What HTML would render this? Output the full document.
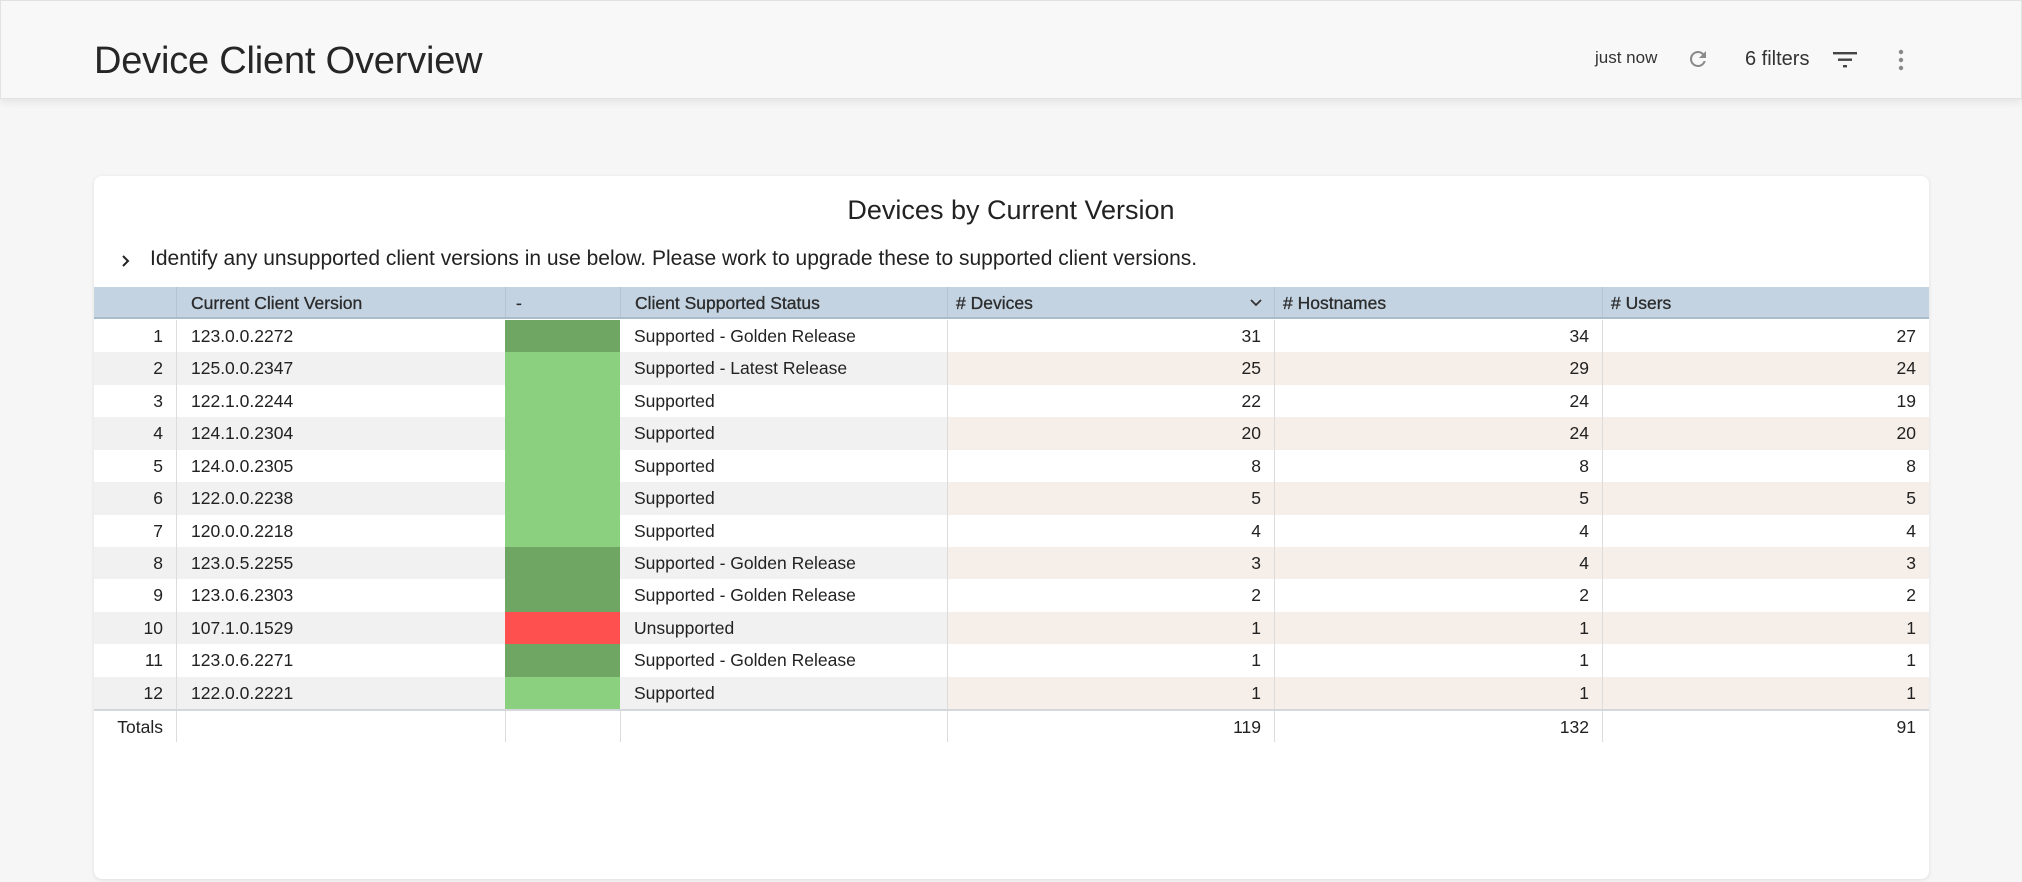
<!DOCTYPE html>
<html><head><meta charset="utf-8"><style>
*{margin:0;padding:0;box-sizing:border-box}
body{width:2022px;height:882px;background:#f6f6f6;font-family:"Liberation Sans",sans-serif;color:#222;position:relative;overflow:hidden}
.hdr{position:absolute;left:0;top:0;width:2022px;height:99px;background:#f8f8f8;border:1px solid #e2e2e2;box-shadow:0 3px 8px rgba(0,0,0,.08)}
.title{position:absolute;left:94px;top:38px;font-size:38px;line-height:46px;color:#262626;letter-spacing:-0.2px}
.hr{position:absolute;top:48px;font-size:17px;color:#333}
.card{position:absolute;left:94px;top:176px;width:1835px;height:703px;background:#fff;border-radius:8px;box-shadow:0 1px 4px rgba(0,0,0,.1)}
.ct{position:absolute;left:0;width:100%;top:195px;text-align:center;font-size:27px;color:#222}
.desc{position:absolute;left:150px;top:247px;font-size:21px;color:#222}
.th{position:absolute;left:94px;top:287px;width:1835px;height:32px;background:#c3d3e2;border-bottom:2px solid #a9bccd}
.c{position:absolute;height:100%;font-size:17.5px;line-height:32px;white-space:nowrap;overflow:hidden}
.th .c{color:#2b2b2b;font-size:17.5px;-webkit-text-stroke:0.3px #2b2b2b}
.row{position:absolute;left:94px;width:1835px;height:33px}
.num{text-align:right;padding-right:13px}
.txt{padding-left:14px}
.bl{border-left:1px solid #dcdcdc}
</style></head><body>
<div class="hdr"></div>
<div class="title">Device Client Overview</div>
<div class="hr" style="left:1595px">just now</div>
<svg style="position:absolute;left:1686px;top:47px" width="24" height="24" viewBox="0 0 24 24"><path d="M17.65 6.35A8 8 0 1 0 19.73 14h-2.08A6 6 0 1 1 12 6c1.66 0 3.14.69 4.22 1.78L13 11h7V4z" fill="#8a8a8a"/></svg>
<div class="hr" style="left:1745px;top:48px;font-size:20px;color:#333">6 filters</div>
<svg style="position:absolute;left:1832px;top:48px" width="26" height="24" viewBox="0 0 26 24"><rect x="1" y="4" width="24" height="2.4" fill="#444"/><rect x="6" y="10.5" width="14" height="2.4" fill="#444"/><rect x="11" y="17" width="4" height="2.4" fill="#444"/></svg>
<svg style="position:absolute;left:1896px;top:48px" width="10" height="24" viewBox="0 0 10 24"><circle cx="5" cy="4" r="2.2" fill="#888"/><circle cx="5" cy="12" r="2.2" fill="#888"/><circle cx="5" cy="20" r="2.2" fill="#888"/></svg>
<div class="card"></div>
<div class="ct">Devices by Current Version</div>
<svg style="position:absolute;left:121px;top:254px" width="10" height="14" viewBox="0 0 10 14"><path d="M2 2l5 5-5 5" stroke="#222" stroke-width="2" fill="none"/></svg>
<div class="desc">Identify any unsupported client versions in use below. Please work to upgrade these to supported client versions.</div>
<div class="th">
<div class="c" style="left:82px;width:329px;padding-left:14px;border-left:1px solid #b4c4d3">Current Client Version</div>
<div class="c" style="left:411px;width:115px;padding-left:10px;border-left:1px solid #b4c4d3">-</div>
<div class="c" style="left:526px;width:327px;padding-left:14px;border-left:1px solid #b4c4d3">Client Supported Status</div>
<div class="c" style="left:853px;width:327px;padding-left:8px;border-left:1px solid #b4c4d3"># Devices<svg style="position:absolute;right:12px;top:12px" width="12" height="8" viewBox="0 0 12 8"><path d="M1 1l5 5 5-5" stroke="#333" stroke-width="1.8" fill="none"/></svg></div>
<div class="c" style="left:1180px;width:328px;padding-left:8px;border-left:1px solid #b4c4d3"># Hostnames</div>
<div class="c" style="left:1508px;width:327px;padding-left:8px;border-left:1px solid #b4c4d3"># Users</div>
</div>
<div id="rows"></div>
<div class="row" style="top:709px;border-top:2px solid #d4d8dc">
<div class="c num" style="left:0;width:82px">Totals</div>
<div class="c bl" style="left:82px;width:329px"></div>
<div class="c bl" style="left:411px;width:115px"></div>
<div class="c bl" style="left:526px;width:327px"></div>
<div class="c num bl" style="left:853px;width:327px">119</div>
<div class="c num bl" style="left:1180px;width:328px">132</div>
<div class="c num bl" style="left:1508px;width:327px">91</div>
</div>
<script>
var d=[["123.0.0.2272","g","Supported - Golden Release",31,34,27],["125.0.0.2347","l","Supported - Latest Release",25,29,24],["122.1.0.2244","l","Supported",22,24,19],["124.1.0.2304","l","Supported",20,24,20],["124.0.0.2305","l","Supported",8,8,8],["122.0.0.2238","l","Supported",5,5,5],["120.0.0.2218","l","Supported",4,4,4],["123.0.5.2255","g","Supported - Golden Release",3,4,3],["123.0.6.2303","g","Supported - Golden Release",2,2,2],["107.1.0.1529","r","Unsupported",1,1,1],["123.0.6.2271","g","Supported - Golden Release",1,1,1],["122.0.0.2221","l","Supported",1,1,1]];
var col={g:"#6fa663",l:"#8bd07e",r:"#ff5050"},h="";
d.forEach(function(r,i){var t=320+i*32.42,e=i%2==1,bg=e?"#f1f1f1":"#fff",nb=e?"#f6eee8":"#fff";
h+='<div class="row" style="top:'+t+'px;height:32.5px;background:'+bg+'">'+
'<div class="c num" style="left:0;width:82px">'+(i+1)+'</div>'+
'<div class="c txt bl" style="left:82px;width:329px">'+r[0]+'</div>'+
'<div class="c" style="left:411px;width:115px;background:'+col[r[1]]+'"></div>'+
'<div class="c txt" style="left:526px;width:327px">'+r[2]+'</div>'+
'<div class="c num bl" style="left:853px;width:327px;background:'+nb+'">'+r[3]+'</div>'+
'<div class="c num bl" style="left:1180px;width:328px;background:'+nb+'">'+r[4]+'</div>'+
'<div class="c num bl" style="left:1508px;width:327px;background:'+nb+'">'+r[5]+'</div></div>';});
document.getElementById("rows").innerHTML=h;
</script>
</body></html>
